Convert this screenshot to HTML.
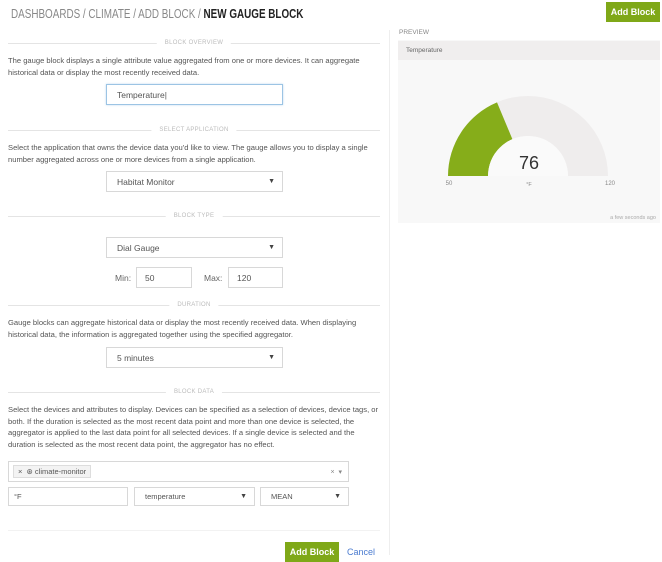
<html><head><style>
body{margin:0;width:662px;height:555px;background:#fff;font-family:"Liberation Sans",sans-serif;color:#666;position:relative;overflow:hidden}
.a{position:absolute}
.t{font-size:7.6px;line-height:11.5px;color:#555;left:8px;width:375px}
.sec{position:absolute;left:8px;width:372px;height:1px;background:#e4e4e4}
.sec span{position:absolute;left:50%;transform:translate(-50%,-50%);top:0;background:#fff;padding:0 8px;font-size:6px;color:#bbb;letter-spacing:.3px}
.box{position:absolute;border:1px solid #d8d8d8;background:#fff;font-size:8.5px;color:#555;box-sizing:border-box;padding-left:10px;display:flex;align-items:center}
.arr{position:absolute;right:7px;font-size:7px;color:#444}
</style></head><body>
<div class="a" style="left:11px;top:6px;font-size:13px;color:#888;transform:scaleX(0.76);transform-origin:0 0;white-space:nowrap">DASHBOARDS / CLIMATE / ADD BLOCK / <b style="color:#222">NEW GAUGE BLOCK</b></div>
<div class="a" style="left:606px;top:2px;width:54px;height:20px;background:#7fa818;color:#fff;font-size:9px;font-weight:bold;display:flex;align-items:center;justify-content:center">Add Block</div>
<div class="a" style="left:389px;top:30px;width:1px;height:525px;background:#eee"></div>

<div class="sec" style="top:43px"><span>BLOCK OVERVIEW</span></div>
<div class="a t" style="top:55px">The gauge block displays a single attribute value aggregated from one or more devices. It can aggregate historical data or display the most recently received data.</div>
<div class="box" style="left:106px;top:84px;width:177px;height:21px;border-color:#9cc4e4;box-shadow:0 0 2px #bcd8ee">Temperature|</div>

<div class="sec" style="top:130px"><span>SELECT APPLICATION</span></div>
<div class="a t" style="top:142px">Select the application that owns the device data you'd like to view. The gauge allows you to display a single number aggregated across one or more devices from a single application.</div>
<div class="box" style="left:106px;top:171px;width:177px;height:21px">Habitat Monitor<span class="arr">▼</span></div>

<div class="sec" style="top:216px"><span>BLOCK TYPE</span></div>
<div class="box" style="left:106px;top:237px;width:177px;height:21px">Dial Gauge<span class="arr">▼</span></div>
<div class="a" style="left:115px;top:273px;font-size:8.5px">Min:</div>
<div class="box" style="left:136px;top:267px;width:56px;height:21px;padding-left:8px">50</div>
<div class="a" style="left:204px;top:273px;font-size:8.5px">Max:</div>
<div class="box" style="left:228px;top:267px;width:55px;height:21px;padding-left:8px">120</div>

<div class="sec" style="top:305px"><span>DURATION</span></div>
<div class="a t" style="top:317px">Gauge blocks can aggregate historical data or display the most recently received data. When displaying historical data, the information is aggregated together using the specified aggregator.</div>
<div class="box" style="left:106px;top:347px;width:177px;height:21px">5 minutes<span class="arr">▼</span></div>

<div class="sec" style="top:392px"><span>BLOCK DATA</span></div>
<div class="a t" style="top:404px">Select the devices and attributes to display. Devices can be specified as a selection of devices, device tags, or both. If the duration is selected as the most recent data point and more than one device is selected, the aggregator is applied to the last data point for all selected devices. If a single device is selected and the duration is selected as the most recent data point, the aggregator has no effect.</div>
<div class="box" style="left:8px;top:461px;width:341px;height:21px;padding-left:4px"><span style="border:1px solid #ddd;background:#f3f3f3;padding:1px 4px;font-size:7.5px;color:#555">× &nbsp;⊛ climate-monitor</span><span style="position:absolute;right:6px;font-size:7px;color:#888">× &nbsp;▾</span></div>
<div class="box" style="left:8px;top:487px;width:120px;height:19px;padding-left:5px;font-size:7.5px">°F</div>
<div class="box" style="left:134px;top:487px;width:121px;height:19px;font-size:7.5px">temperature<span class="arr">▼</span></div>
<div class="box" style="left:260px;top:487px;width:89px;height:19px;font-size:7.5px">MEAN<span class="arr">▼</span></div>
<div class="a" style="left:8px;top:530px;width:372px;height:1px;background:#f2f2f2"></div>
<div class="a" style="left:285px;top:542px;width:54px;height:20px;background:#7fa818;color:#fff;font-size:9px;font-weight:bold;text-align:center;line-height:20px">Add Block</div>
<div class="a" style="left:347px;top:547px;font-size:9px;color:#4a7bd0">Cancel</div>

<div class="a" style="left:399px;top:29px;font-size:6.5px;color:#888">PREVIEW</div>
<div class="a" style="left:398px;top:40px;width:262px;height:183px;background:#f8f8f8"></div>
<div class="a" style="left:398px;top:41px;width:262px;height:19px;background:#f0eeee;font-size:6.5px;color:#666;line-height:19px;padding-left:8px;box-sizing:border-box">Temperature</div>
<svg class="a" style="left:398px;top:40px" width="262" height="183">
<path d="M50 136 A80 80 0 0 1 210 136 L170 136 A40 40 0 0 0 90 136 Z" fill="#efeded"/>
<path d="M50 136 A80 80 0 0 1 99 62.4 L114.4 99.2 A40 40 0 0 0 90 136 Z" fill="#86ad1a"/>
<path d="M90 136 A40 40 0 0 1 170 136 Z" fill="#fafafa"/>
<text x="131" y="129" font-size="18" fill="#333" text-anchor="middle" font-family="Liberation Sans">76</text>
<text x="51" y="145" font-size="6" fill="#888" text-anchor="middle">50</text>
<text x="131" y="146" font-size="5.5" fill="#888" text-anchor="middle">°F</text>
<text x="212" y="145" font-size="6" fill="#888" text-anchor="middle">120</text>
<text x="258" y="179" font-size="5.5" fill="#aaa" text-anchor="end">a few seconds ago</text>
</svg>
</body></html>
